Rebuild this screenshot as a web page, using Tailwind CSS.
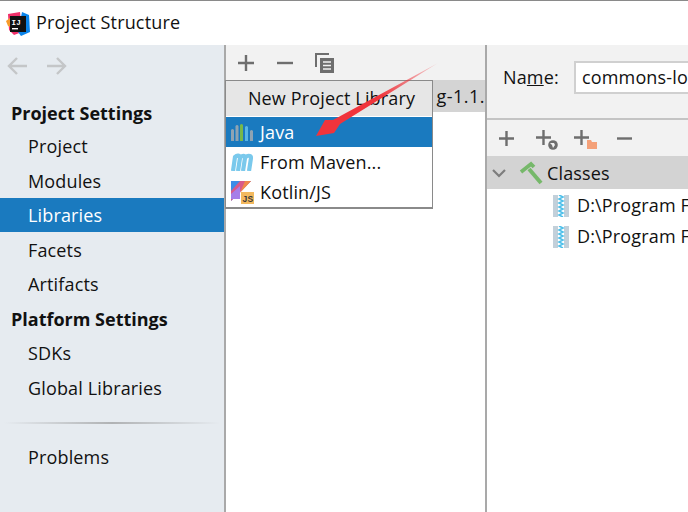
<!DOCTYPE html>
<html lang="en">

<head>
    <meta charset="UTF-8">
    <title>Project Structure</title>
    <script src="https://cdn.jsdelivr.net/npm/@tailwindcss/browser@4"></script>
</head>

<body class="w-[688px] h-[512px] overflow-hidden bg-white font-['Open_Sans','Noto_Sans',sans-serif] text-[18px] tracking-[0.15px] text-[#111]">
    <div class="relative w-[688px] h-[512px] overflow-hidden flex flex-col">
        <!-- title bar -->
        <header class="h-[45px] shrink-0 border-t border-[#8a8a8a] bg-white flex items-center pl-[6px]">
            <svg width="25" height="24" viewBox="0 0 25 24" class="mt-[1px]">
                <path d="M2 2 14 0 16 20 8 23 3 18Z" fill="#f0306a" />
                <path d="M0 9 4 6 5 15 2 14Z" fill="#f79a2a" />
                <path d="M16 0 23 3 24 20 15 24 12 20Z" fill="#0a84ea" />
                <rect x="4" y="4" width="16" height="16" fill="#111" />
                <text x="5.5" y="12.5" font-size="7.5" font-weight="700" fill="#fff" font-family="Liberation Mono">IJ</text>
                <rect x="6" y="16" width="6" height="1.4" fill="#fff" />
            </svg>
            <span class="ml-[5px] pb-[3px] text-[18px] leading-none">Project Structure</span>
        </header>

        <div class="flex-1 flex min-h-0">
            <!-- sidebar -->
            <aside class="w-[226px] shrink-0 bg-[#e6ebf0] border-r-2 border-[#a9a9a9] flex flex-col">
                <div class="h-[51px] flex items-start pt-[11px] pl-[7px] gap-[20px]">
                    <svg width="20" height="20" viewBox="0 0 20 20" fill="none" stroke="#c4c6c8" stroke-width="2.4"><path d="M20 10H2M10 2 2 10l8 8" /></svg>
                    <svg width="20" height="20" viewBox="0 0 20 20" fill="none" stroke="#c4c6c8" stroke-width="2.4"><path d="M0 10h18M10 2l8 8-8 8" /></svg>
                </div>
                <div class="h-[33px] pt-[1px] flex items-center pl-[11px] font-bold tracking-normal">Project Settings</div>
                <div class="h-[34px] flex items-center pl-[28px]">Project</div>
                <div class="h-[35px] pt-[1px] flex items-center pl-[28px]">Modules</div>
                <div class="h-[34px] flex items-center pl-[28px] bg-[#1a7abf] text-white">Libraries</div>
                <div class="h-[35px] pt-[1px] flex items-center pl-[28px]">Facets</div>
                <div class="h-[34px] flex items-center pl-[28px]">Artifacts</div>
                <div class="h-[36px] pt-[1px] flex items-center pl-[11px] font-bold tracking-normal">Platform Settings</div>
                <div class="h-[33px] flex items-center pl-[28px]">SDKs</div>
                <div class="h-[36px] flex items-center pl-[28px]">Global Libraries</div>
                <div class="mt-[16px] mx-[4px] h-[2px] bg-gradient-to-r from-transparent via-[#b0b2b4] to-transparent"></div>
                <div class="mt-[16px] h-[34px] flex items-center pl-[28px]">Problems</div>
            </aside>

            <!-- libraries list -->
            <section class="w-[261px] shrink-0 border-r-2 border-[#a9a9a9] flex flex-col">
                <div class="h-[35px] bg-[#f2f2f2] flex items-center pl-[12px]">
                    <svg class="mr-[23px]" width="16" height="16" viewBox="0 0 16 16" stroke="#6e6e6e" stroke-width="2.4"><path d="M0 8h16M8 0v16" /></svg>
                    <svg class="mr-[22px]" width="16" height="16" viewBox="0 0 16 16" stroke="#6e6e6e" stroke-width="2.4"><path d="M0 8h16" /></svg>
                    <svg width="19" height="20" viewBox="0 0 19 20">
                        <path d="M0 14V0h14v2H2v12Z" fill="#6e6e6e" />
                        <rect x="5" y="5" width="14" height="15" fill="#6e6e6e" />
                        <path d="M8 9h8M8 12.5h8M8 16h8" stroke="#f2f2f2" stroke-width="1.4" />
                    </svg>
                </div>
                <div class="h-[32px] bg-[#d4d4d4] flex items-center justify-end overflow-hidden">
                    <span class="whitespace-nowrap tracking-[0.5px]">g-1.1.</span>
                </div>
                <div class="flex-1 bg-white"></div>
            </section>

            <!-- library detail -->
            <section class="flex-1 min-w-0 flex flex-col overflow-hidden">
                <div class="h-[75px] shrink-0 bg-[#f2f2f2] border-b-2 border-[#c4c4c4] flex items-center pl-[16px] pb-[9px]">
                    <span class="w-[71px] shrink-0">Na<span class="underline">m</span>e:</span>
                    <div class="w-[130px] h-[33px] shrink-0 bg-white border-2 border-[#d0d0d0] flex items-center pl-[6px] whitespace-nowrap">commons-lo</div>
                </div>
                <div class="h-[36px] shrink-0 bg-[#f2f2f2] flex items-center pl-[12px]">
                    <svg class="mr-[22px]" width="15" height="15" viewBox="0 0 15 15" stroke="#6e6e6e" stroke-width="2.4"><path d="M0 7.5h15M7.5 0v15" /></svg>
                    <div class="relative w-[24px] h-[24px] mr-[14px]">
                        <svg class="absolute left-0 top-[4px]" width="15" height="15" viewBox="0 0 15 15" stroke="#6e6e6e" stroke-width="2.4"><path d="M0 7.5h15M7.5 0v15" /></svg>
                        <svg class="absolute left-[12px] top-[14px]" width="10" height="10" viewBox="0 0 10 10"><circle cx="5" cy="5" r="4.8" fill="#6e6e6e" /><path d="M2 3h4l1 2-2 3-1-3Z" fill="#f2f2f2" /></svg>
                    </div>
                    <div class="relative w-[24px] h-[24px] mr-[19px]">
                        <svg class="absolute left-0 top-[4px]" width="15" height="15" viewBox="0 0 15 15" stroke="#6e6e6e" stroke-width="2.4"><path d="M0 7.5h15M7.5 0v15" /></svg>
                        <svg class="absolute left-[13px] top-[14px]" width="10" height="9" viewBox="0 0 10 9"><path d="M0 0h4l1 2h5v7H0Z" fill="#f4a078" /></svg>
                    </div>
                    <svg width="15" height="15" viewBox="0 0 15 15" stroke="#6e6e6e" stroke-width="2.4"><path d="M0 7.5h15" /></svg>
                </div>
                <div class="h-[33px] shrink-0 bg-[#d3d3d3] flex items-center pl-[5px]">
                    <svg width="14" height="14" viewBox="0 0 14 14" fill="none" stroke="#7d7d7d" stroke-width="2.2"><path d="M1 4l6 6 6-6" /></svg>
                    <svg class="ml-[13px]" width="24" height="24" viewBox="0 0 24 24" fill="none" stroke="#76b86a">
                        <path d="M10 8 22 22" stroke-width="4" />
                        <path d="M2 11 12 3l3 3" stroke-width="3.8" />
                    </svg>
                    <span class="ml-[4px] pt-[1px]">Classes</span>
                </div>
                <div class="flex-1 bg-white pt-[1px]">
                    <div class="h-[31px] flex items-center pl-[66px] whitespace-nowrap">
                        <svg class="shrink-0 mr-[8px]" width="16" height="22" viewBox="0 0 16 22">
                            <rect width="16" height="22" fill="#c2d0da" />
                            <rect x="5" width="6" height="22" fill="#fff" />
                            <path d="M6 0 10 2 6 4 10 6 6 8 10 10 6 12 10 14 6 16 10 18 6 20 10 22" fill="none" stroke="#4fc0ea" stroke-width="1.6" />
                        </svg>D:\Program F
                    </div>
                    <div class="h-[31px] flex items-center pl-[66px] whitespace-nowrap">
                        <svg class="shrink-0 mr-[8px]" width="16" height="22" viewBox="0 0 16 22">
                            <rect width="16" height="22" fill="#c2d0da" />
                            <rect x="5" width="6" height="22" fill="#fff" />
                            <path d="M6 0 10 2 6 4 10 6 6 8 10 10 6 12 10 14 6 16 10 18 6 20 10 22" fill="none" stroke="#4fc0ea" stroke-width="1.6" />
                        </svg>D:\Program F
                    </div>
                </div>
            </section>
        </div>

        <!-- new library popup -->
        <div class="absolute left-[225px] top-[80px] w-[208px] h-[129px] bg-white border border-[#8a8a8a] border-b-2 flex flex-col">
            <div class="h-[36px] bg-[#e6e6e6] flex items-center justify-center pl-[5px] border-b border-white">New Project Library</div>
            <div class="h-[30px] bg-[#1a7abf] text-white flex items-center pl-[5px] gap-[7px]">
                <svg width="22" height="19" viewBox="0 0 22 19">
                    <path d="M0 18V7q1.500-2 3 0v11Z" fill="#8fa3b3" />
                    <path d="M4.500 18V3q1.500-2 3 0v15Z" fill="#8fa3b3" />
                    <path d="M9 18V2q1.500-2 3 0v16Z" fill="#77b84a" />
                    <path d="M14 18V4q1.500-2 3 0v14Z" fill="#57b5e6" />
                    <path d="M19 18V8q1.500-2 3 0v10Z" fill="#8fa3b3" />
                </svg>
                <span>Java</span>
            </div>
            <div class="h-[30px] flex items-center pl-[5px] gap-[7px]">
                <svg width="22" height="18" viewBox="0 0 22 18" fill="none" stroke="#7ac9ec" stroke-width="4.2">
                    <path d="M2 18 4 4c2-2 5-2 5 1L7 18M9 5c2-3 5-3 5 0l-2 13M14 5c2-3 6-3 6 0l-2 13" />
                </svg>
                <span>From Maven...</span>
            </div>
            <div class="h-[30px] flex items-center pl-[5px] gap-[6px]">
                <svg width="23" height="23" viewBox="0 0 23 23">
                    <path d="M0 0h20L0 20Z" fill="#3d8de8" />
                    <path d="M9 0h11L0 20V10Z" fill="#d85a8a" />
                    <path d="M14 0h6L9 12Z" fill="#f0894a" />
                    <path d="M0 13 9 5v13H0Z" fill="#a67ee8" />
                    <rect x="10" y="11" width="13" height="12" fill="#f3b95e" />
                    <text x="11.5" y="21" font-size="8.5" font-weight="700" fill="#3a3a3a" font-family="Liberation Sans">JS</text>
                </svg>
                <span>Kotlin/JS</span>
            </div>
        </div>

        <!-- red annotation arrow -->
        <svg class="absolute left-0 top-0" width="688" height="512" viewBox="0 0 688 512">
            <defs>
                <linearGradient id="arrowFade" x1="438" y1="63" x2="380" y2="98" gradientUnits="userSpaceOnUse">
                    <stop offset="0" stop-color="#f0343c" stop-opacity="0.15" />
                    <stop offset="1" stop-color="#f0343c" />
                </linearGradient>
            </defs>
            <path d="M438 63 340 124 334 133 316 136 325 120 333 120Z" fill="url(#arrowFade)" />
        </svg>
    </div>
</body>

</html>
